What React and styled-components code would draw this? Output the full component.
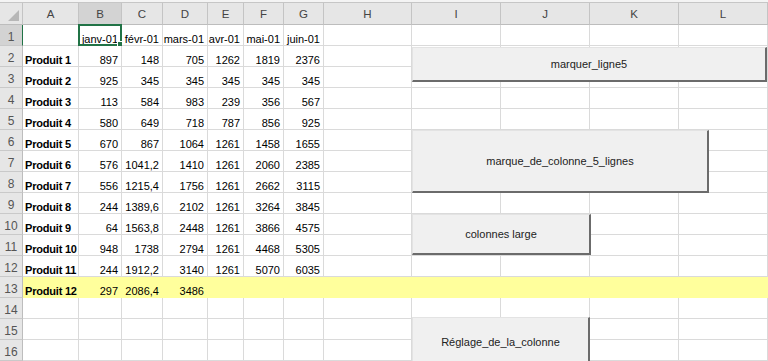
import React from 'react'
import styled, {createGlobalStyle} from "styled-components";

const GlobalStyle = createGlobalStyle`
  html, body {
    margin: 0;
    padding: 0;
    background: #ffffff;
    overflow: hidden;
  }
  body {
    font-family: "Liberation Sans", Arial, sans-serif;
  }
`

const COLUMNS = '23px 56px 43px 41px 45px 36px 40px 40px 88px 89px 89px 89px 89px'
const LETTERS = ['A', 'B', 'C', 'D', 'E', 'F', 'G', 'H', 'I', 'J', 'K', 'L']

const rows = [
    ['', 'janv-01', 'févr-01', 'mars-01', 'avr-01', 'mai-01', 'juin-01'],
    ['Produit 1', '897', '148', '705', '1262', '1819', '2376'],
    ['Produit 2', '925', '345', '345', '345', '345', '345'],
    ['Produit 3', '113', '584', '983', '239', '356', '567'],
    ['Produit 4', '580', '649', '718', '787', '856', '925'],
    ['Produit 5', '670', '867', '1064', '1261', '1458', '1655'],
    ['Produit 6', '576', '1041,2', '1410', '1261', '2060', '2385'],
    ['Produit 7', '556', '1215,4', '1756', '1261', '2662', '3115'],
    ['Produit 8', '244', '1389,6', '2102', '1261', '3264', '3845'],
    ['Produit 9', '64', '1563,8', '2448', '1261', '3866', '4575'],
    ['Produit 10', '948', '1738', '2794', '1261', '4468', '5305'],
    ['Produit 11', '244', '1912,2', '3140', '1261', '5070', '6035'],
    ['Produit 12', '297', '2086,4', '3486', '', '', ''],
    [], [], [],
]

const buttons = [
    {label: 'marquer_ligne5', left: 412, top: 47, width: 355, height: 35},
    {label: 'marque_de_colonne_5_lignes', left: 412, top: 130, width: 297, height: 63},
    {label: 'colonnes large', left: 412, top: 214, width: 179, height: 41},
    {label: 'Réglage_de_la_colonne', left: 412, top: 317, width: 178, height: 50},
]

const Sheet = styled.div`
    position: relative;
    width: 768px;
    height: 361px;
    overflow: hidden;
    color: #000;
`

const TopStrip = styled.div`
    height: 2px;
    background: #f4f4f4;
    border-bottom: 1px solid #c6c6c6;
`

const Row = styled.div`
    display: grid;
    grid-template-columns: ${COLUMNS};
    height: ${props => props.header ? '22px' : '21px'};
`

const ColHeader = styled.div`
    box-sizing: border-box;
    display: flex;
    align-items: center;
    justify-content: center;
    background: ${props => props.selected ? '#d3d3d3' : '#e6e6e6'};
    border-right: 1px solid #c4c4c4;
    border-bottom: 1px solid ${props => props.selected ? '#217346' : '#bdbdbd'};
    color: #444;
    font-size: 11.5px;
`

const Corner = styled.div`
    position: relative;
    box-sizing: border-box;
    background: #e6e6e6;
    border-right: 1px solid #c4c4c4;
    border-bottom: 1px solid #bdbdbd;

    &::after {
        content: '';
        position: absolute;
        right: 3px;
        bottom: 3px;
        border-style: solid;
        border-width: 0 0 11px 11px;
        border-color: transparent transparent #b7b7b7 transparent;
    }
`

const RowHeader = styled.div`
    box-sizing: border-box;
    display: flex;
    align-items: center;
    justify-content: center;
    padding-top: 4px;
    background: ${props => props.selected ? '#d3d3d3' : '#e6e6e6'};
    border-right: 1px solid ${props => props.selected ? '#217346' : '#bdbdbd'};
    border-bottom: 1px solid #c9c9c9;
    color: #555;
    font-size: 12px;
`

const Cell = styled.div`
    position: relative;
    box-sizing: border-box;
    display: flex;
    align-items: flex-end;
    justify-content: ${props => props.label ? 'flex-start' : 'flex-end'};
    padding: 0 3px 0 2px;
    background: ${props => props.fill || '#ffffff'};
    border-right: 1px solid ${props => props.fill || '#dadada'};
    border-bottom: 1px solid ${props => props.fill || '#dadada'};
    font-size: 11px;
    line-height: 12px;
    font-weight: ${props => props.label ? 'bold' : 'normal'};
    letter-spacing: ${props => props.label ? '-0.2px' : '0'};
    white-space: nowrap;
`

const Selection = styled.div`
    position: absolute;
    left: -1px;
    top: -1px;
    right: -1px;
    bottom: -1px;
    border: 2px solid #217346;
    pointer-events: none;

    &::after {
        content: '';
        position: absolute;
        right: -4px;
        bottom: -4px;
        width: 5px;
        height: 5px;
        background: #217346;
        border: 1px solid #fff;
    }
`

const MacroButton = styled.div`
    position: absolute;
    box-sizing: border-box;
    display: flex;
    align-items: center;
    justify-content: center;
    background: #f0f0f0;
    border-top: 1px solid #e3e3e3;
    border-left: 1px solid #e3e3e3;
    border-right: 2px solid #6b6b6b;
    border-bottom: 2px solid #6b6b6b;
    color: #222;
    font-size: 11px;
`

const App = () => {
    return (
        <Sheet>
            <GlobalStyle/>
            <TopStrip/>
            <Row header>
                <Corner/>
                {LETTERS.map(letter => (
                    <ColHeader key={letter} selected={letter === 'B'}>{letter}</ColHeader>
                ))}
            </Row>
            {rows.map((row, r) => (
                <Row key={r}>
                    <RowHeader selected={r === 0}>{r + 1}</RowHeader>
                    {LETTERS.map((letter, c) => (
                        <Cell key={letter} label={c === 0} fill={r === 12 ? '#ffff9c' : undefined}>
                            {row[c] || ''}
                            {r === 0 && c === 1 && <Selection/>}
                        </Cell>
                    ))}
                </Row>
            ))}
            {buttons.map(b => (
                <MacroButton key={b.label} style={{left: b.left, top: b.top, width: b.width, height: b.height}}>
                    {b.label}
                </MacroButton>
            ))}
        </Sheet>
    )
}

export default App
